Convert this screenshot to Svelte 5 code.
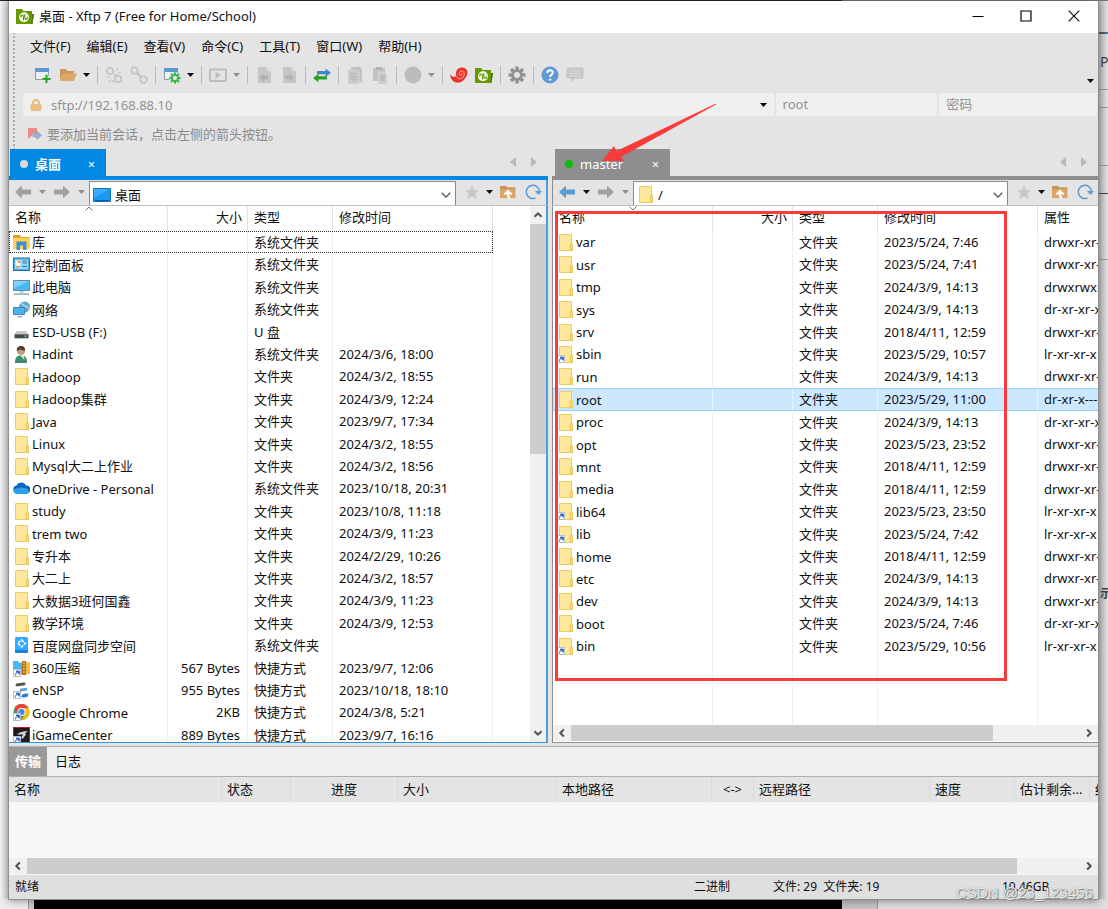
<script>
  const menus = ['文件(F)', '编辑(E)', '查看(V)', '命令(C)', '工具(T)', '窗口(W)', '帮助(H)'];

  const tools = [
    { icon: 'newSession', label: '新建会话' },
    { icon: 'open', label: '打开' },
    { icon: 'caret', label: '打开列表' },
    null,
    { icon: 'unlink', label: '断开' },
    { icon: 'link', label: '重新连接' },
    null,
    { icon: 'sessionProps', label: '会话属性' },
    { icon: 'caret', label: '属性列表' },
    null,
    { icon: 'play', label: '运行' },
    { icon: 'caret', label: '运行列表', off: true },
    null,
    { icon: 'docLeft', label: '传输到左侧' },
    { icon: 'docRight', label: '传输到右侧' },
    null,
    { icon: 'sync', label: '同步' },
    null,
    { icon: 'copy', label: '复制' },
    { icon: 'paste', label: '粘贴' },
    null,
    { icon: 'globe', label: '编码' },
    { icon: 'caret', label: '编码列表', off: true },
    null,
    { icon: 'shell', label: 'Xshell' },
    { icon: 'ftp', label: 'Xftp' },
    null,
    { icon: 'gear', label: '选项' },
    null,
    { icon: 'help', label: '帮助' },
    { icon: 'chat', label: '反馈' }
  ];

  const local = [
    ['library', '库', '', '系统文件夹', ''],
    ['control', '控制面板', '', '系统文件夹', ''],
    ['pc', '此电脑', '', '系统文件夹', ''],
    ['network', '网络', '', '系统文件夹', ''],
    ['drive', 'ESD-USB (F:)', '', 'U 盘', ''],
    ['user', 'Hadint', '', '系统文件夹', '2024/3/6, 18:00'],
    ['folder', 'Hadoop', '', '文件夹', '2024/3/2, 18:55'],
    ['folder', 'Hadoop集群', '', '文件夹', '2024/3/9, 12:24'],
    ['folder', 'Java', '', '文件夹', '2023/9/7, 17:34'],
    ['folder', 'Linux', '', '文件夹', '2024/3/2, 18:55'],
    ['folder', 'Mysql大二上作业', '', '文件夹', '2024/3/2, 18:56'],
    ['cloud', 'OneDrive - Personal', '', '系统文件夹', '2023/10/18, 20:31'],
    ['folder', 'study', '', '文件夹', '2023/10/8, 11:18'],
    ['folder', 'trem two', '', '文件夹', '2024/3/9, 11:23'],
    ['folder', '专升本', '', '文件夹', '2024/2/29, 10:26'],
    ['folder', '大二上', '', '文件夹', '2024/3/2, 18:57'],
    ['folder', '大数据3班何国鑫', '', '文件夹', '2024/3/9, 11:23'],
    ['folder', '教学环境', '', '文件夹', '2024/3/9, 12:53'],
    ['baidu', '百度网盘同步空间', '', '系统文件夹', ''],
    ['zip', '360压缩', '567 Bytes', '快捷方式', '2023/9/7, 12:06'],
    ['ensp', 'eNSP', '955 Bytes', '快捷方式', '2023/10/18, 18:10'],
    ['chrome', 'Google Chrome', '2KB', '快捷方式', '2024/3/8, 5:21'],
    ['igame', 'iGameCenter', '889 Bytes', '快捷方式', '2023/9/7, 16:16']
  ];

  const remote = [
    ['folder', 'var', '2023/5/24, 7:46', 'drwxr-xr-x'],
    ['folder', 'usr', '2023/5/24, 7:41', 'drwxr-xr-x'],
    ['folder', 'tmp', '2024/3/9, 14:13', 'drwxrwxrwt'],
    ['folder', 'sys', '2024/3/9, 14:13', 'dr-xr-xr-x'],
    ['folder', 'srv', '2018/4/11, 12:59', 'drwxr-xr-x'],
    ['folderLink', 'sbin', '2023/5/29, 10:57', 'lr-xr-xr-x'],
    ['folder', 'run', '2024/3/9, 14:13', 'drwxr-xr-x'],
    ['folder', 'root', '2023/5/29, 11:00', 'dr-xr-x---'],
    ['folder', 'proc', '2024/3/9, 14:13', 'dr-xr-xr-x'],
    ['folder', 'opt', '2023/5/23, 23:52', 'drwxr-xr-x'],
    ['folder', 'mnt', '2018/4/11, 12:59', 'drwxr-xr-x'],
    ['folder', 'media', '2018/4/11, 12:59', 'drwxr-xr-x'],
    ['folderLink', 'lib64', '2023/5/23, 23:50', 'lr-xr-xr-x'],
    ['folderLink', 'lib', '2023/5/24, 7:42', 'lr-xr-xr-x'],
    ['folder', 'home', '2018/4/11, 12:59', 'drwxr-xr-x'],
    ['folder', 'etc', '2024/3/9, 14:13', 'drwxr-xr-x'],
    ['folder', 'dev', '2024/3/9, 14:13', 'drwxr-xr-x'],
    ['folder', 'boot', '2023/5/24, 7:46', 'dr-xr-xr-x'],
    ['folderLink', 'bin', '2023/5/29, 10:56', 'lr-xr-xr-x']
  ];

  const queue = ['名称', '状态', '进度', '大小', '本地路径', '<->', '远程路径', '速度', '估计剩余...', '经过时间'];
  const gearAngles = [0, 45, 90, 135, 180, 225, 270, 315];
</script>

{#snippet gearShape(cx, cy, r, color, hole)}
  {#each gearAngles as a}
    <rect x={cx - r * 0.2} y={cy - r} width={r * 0.4} height={r * 0.5} fill={color} transform="rotate({a} {cx} {cy})" />
  {/each}
  <circle {cx} {cy} r={r * 0.52} fill="none" stroke={color} stroke-width={r * (hole ? 0.34 : 0.28)} />
{/snippet}

{#snippet shortcut()}
  <rect x="0.5" y="9.5" width="7" height="7" fill="#fff" stroke="#b8c0cc" />
  <path d="M2.200 15.500c0-2 .8-2.700 2-2.900M3 11h3.400v3.400z" fill="#2a62b8" stroke="#2a62b8" stroke-width="0.7" />
{/snippet}

{#snippet ftpMark()}
  <path d="M0 2h6l1.5 2H16v3h2l-1.6 10H0z" fill="#669900" />
  <path d="M16 7h2l-1.6 10h-1z" fill="#4c7a00" />
  <circle cx="8" cy="10.2" r="4.9" fill="#fff" />
  <path d="M7.400 13.500V9.300a1.300 1.300 0 1 0-2.100 1.200M8.800 7v4.200a1.300 1.300 0 1 0 2.100-1.200" fill="none" stroke="#669900" stroke-width="1.200" />
{/snippet}

{#snippet tool(name)}
  {#if name === 'caret'}
    <svg class="caret" viewBox="0 0 7 4" aria-hidden="true"><path d="M0 0h7L3.5 4z" fill="currentColor" /></svg>
  {:else}
    <svg class="tool-icon" viewBox="0 0 18 18" aria-hidden="true">
      {#if name === 'newSession'}
        <path d="M1.5 3.5h13v10h-13z" fill="#eef0f2" stroke="#8d9aa5" />
        <path d="M1 2h14v4H1z" fill="#5a9ad0" />
        <path d="M12.5 8.5v8.5M8.3 12.8h8.6" stroke="#e4e4e4" stroke-width="4" />
        <path d="M12.5 8.8v8.2M8.4 12.9h8.2" stroke="#22a822" stroke-width="2" />
      {:else if name === 'open'}
        <path d="M1 3h6l1.5 2H15v3H4L1 15z" fill="#c9985c" />
        <path d="M4.5 7.5H18L14.8 15H1z" fill="#dba868" />
      {:else if name === 'unlink'}
        <g fill="none" stroke="#c6c6c6" stroke-width="2"><circle cx="5" cy="5" r="3.2" /><circle cx="13.2" cy="13" r="3.2" /></g>
        <path d="M11 4.5 13 2M13.5 6.5H16M12 9l-1-1M2 11.500l2.500-.5M4 16l2-2.500M8 17v-3" stroke="#c6c6c6" stroke-width="1.500" />
        <path d="m9 9 2 2" stroke="#c6c6c6" stroke-width="2" />
      {:else if name === 'link'}
        <g fill="none" stroke="#c6c6c6" stroke-width="2"><circle cx="4.500" cy="4.500" r="3.200" /><circle cx="13.500" cy="13.500" r="3.200" /><path d="m6.500 6.500 5 5" stroke-width="2.600" /></g>
      {:else if name === 'sessionProps'}
        <path d="M1.500 3.500h13v10h-13z" fill="#eef0f2" stroke="#8d9aa5" />
        <path d="M1 2h14v4H1z" fill="#5a9ad0" />
        <circle cx="12" cy="12" r="5.800" fill="#e8ebe8" />
        {@render gearShape(12, 12, 5.6, '#3bb54a', false)}
      {:else if name === 'play'}
        <rect x="1" y="3.500" width="16" height="11.500" rx="1" fill="none" stroke="#bdbdbd" stroke-width="2" />
        <path d="M6.500 6v6.500l5.500-3.200z" fill="#bdbdbd" />
      {:else if name === 'docLeft' || name === 'docRight'}
        <path d="M3 1h8.500L16 5.500V17H3z" fill="#c6c6c6" />
        <path d="M11.500 1v4.500H16z" fill="#dadada" />
        <path d={name === 'docLeft' ? 'M4.5 11.500 9 7.500v2.300h4v3.400H9v2.300z' : 'M14 11.500 9.500 7.500v2.300h-4v3.400h4v2.300z'} fill="#b2b2b2" />
      {:else if name === 'sync'}
        <path d="M4 5h8.500V2.500L18 6.700l-5.500 4.200V8.300H4z" fill="#3f86cf" />
        <path d="M14 10.200H5.500V7.800L0 12l5.500 4.200v-2.600H14z" fill="#26a326" />
      {:else if name === 'copy'}
        <path d="M5 1h9l2 2v13H5z" fill="#c2c2c2" /><path d="M2 4h9l2 2v12H2z" fill="#c9c9c9" stroke="#dedede" stroke-width=".6" />
        <path d="M4 8h6M4 10.500h7M4 13h7" stroke="#b0b0b0" />
      {:else if name === 'paste'}
        <path d="M2 2h12v13H2z" fill="#c2c2c2" /><path d="M5 1h6v3H5z" fill="#b2b2b2" /><path d="M7 6h7l2 2v10H7z" fill="#cdcdcd" stroke="#dedede" stroke-width=".6" />
        <path d="M9 10h5M9 12h5M9 14h5" stroke="#b0b0b0" />
      {:else if name === 'globe'}
        <circle cx="9" cy="9" r="8.500" fill="#bcbcbc" />
      {:else if name === 'shell'}
        <path d="M0 8.500c2 2.500 4.800 3 6.400 1.500C4.500 5.500 8 1 12.500 1.500 17 2 18.500 6 16.800 9.500 15 14 11 17.200 6.800 16.600 2.500 16 .5 12.500 0 8.500z" fill="#e8342a" />
        <path d="M7 10.500c1 3.400 5.500 2.800 7-.8 1.200-3-1-5.300-3.200-4.400-2 .9-2 3.700 0 3.900 1.500.1 2-1.700.9-2" fill="none" stroke="#f4b6b0" stroke-width="1" />
      {:else if name === 'ftp'}
        {@render ftpMark()}
      {:else if name === 'gear'}
        {@render gearShape(9, 9, 8.5, '#8f9294', true)}
      {:else if name === 'help'}
        <circle cx="9" cy="9" r="8.500" fill="#5f9ad3" />
        <path d="M6.200 7c0-3.800 5.800-3.600 5.600-.3-.1 2-2.700 1.900-2.700 4.300" fill="none" stroke="#fff" stroke-width="2" />
        <circle cx="9.100" cy="13.600" r="1.200" fill="#fff" />
      {:else if name === 'chat'}
        <path d="M1.500 1.500h15l1 1v9l-1 1H9l-4 4v-4H1.500l-1-1v-9z" fill="#c6c6c6" />
        <path d="M3.500 5h11M3.500 7.500h11M3.500 10h11" stroke="#dcdcdc" />
      {/if}
    </svg>
  {/if}
{/snippet}

{#snippet fileIcon(name)}
  <svg class="file-icon" viewBox="0 0 17 17" aria-hidden="true">
    {#if name === 'folder' || name === 'folderLink'}
      <path d="M2.500.5h12v11l1 .8v4.200h-13z" fill="#ffe79b" stroke="#eccb62" />
      <path d="M13.200 16.500V10l2.300-.5v7z" fill="#f8d978" stroke="#e9c455" stroke-width=".8" />
      {#if name === 'folderLink'}{@render shortcut()}{/if}
    {:else if name === 'library'}
      <path d="M0 1h7l1 2h8.500v3H0z" fill="#e0a21b" /><path d="M0 4h17v11H0z" fill="#ffd15c" /><path d="M3.500 16V7.500h10V16H10v-4.500H7V16z" fill="#3d8fd0" />
    {:else if name === 'control'}
      <rect x=".5" y="2" width="16" height="12.500" fill="#49b4ec" stroke="#2c6f9f" />
      <rect x="2" y="3.500" width="13" height="9.500" fill="#9bd8f8" /><circle cx="5" cy="7" r="2.600" fill="#fff" /><path d="M5 7V4.400A2.600 2.600 0 0 1 7.600 7z" fill="#f29a1f" />
      <path d="M9.500 5h4.500M9.500 7h4.500M9 10.500h5" stroke="#2778b8" stroke-width="1.200" /><path d="M3 11h3" stroke="#e99a2e" stroke-width="1.400" />
    {:else if name === 'pc'}
      <path d="M.5 1.500h16v10H.5z" fill="#4bb8f5" stroke="#5b8fb4" /><path d="M1 2h15L1 9z" fill="#83d1fa" /><path d="M6.500 12h4v1.500h-4z" fill="#b8c6d0" /><path d="M1 15h15" stroke="#7b98ad" stroke-width="1.300" />
    {:else if name === 'network'}
      <circle cx="11.500" cy="6" r="5.500" fill="#5aa8cb" /><path d="M8 2c3 1 1 3 4 3s2 3 4.600 2" stroke="#b8dbe8" stroke-width="1.500" fill="none" />
      <path d="M.5 6.500h11v7H.5z" fill="#42b3f4" stroke="#4a86ae" /><path d="M4 15h5v1.300H4z" fill="#8fa8b8" />
    {:else if name === 'drive'}
      <path d="M3.500 7h10l2 3.500h-14z" fill="#c9c9c9" /><path d="M1.500 10.300h14v4h-14z" fill="#45494c" /><circle cx="12.500" cy="12.300" r="1" fill="#49e25c" />
    {:else if name === 'user'}
      <path d="M2 17c-.3-5 2-7.500 6-7.700 4 .2 6.500 2.700 6 7.700z" fill="#3f8f6c" /><path d="M7 9h3.500l1 5z" fill="#dff0e8" /><circle cx="8" cy="5" r="3.900" fill="#c79a77" /><path d="M3.800 5C3.300 0 7 0 8.500 0s4.200 1 3.400 5C9.500 4 7 3.500 6 4z" fill="#4d4038" />
    {:else if name === 'cloud'}
      <path d="M4 13.500a4 4 0 0 1-.5-7.900A5.300 5.300 0 0 1 13 5.500a4 4 0 0 1 .5 8z" fill="#0a66c2" /><path d="M4 14a3 3 0 0 1-2.500-5L8 7.500l5.500 1a2.900 2.900 0 0 1 .2 5.500z" fill="#28a0ea" />
    {:else if name === 'baidu'}
      <rect x="2" y="0" width="13" height="16" rx="1.500" fill="#35a8ff" /><path d="M8.500 2.800 12.200 6.300 8.500 9.800 4.800 6.300z" fill="none" stroke="#fff" stroke-width="1.600" stroke-dasharray="3 1" /><path d="M2 13h13v1.500A1.500 1.500 0 0 1 13.500 16h-10A1.500 1.500 0 0 1 2 14.500z" fill="#1c80da" />
    {:else if name === 'zip'}
      <path d="M0 1h5l1 1.500h5V14H0z" fill="#49b6ee" /><path d="M9 1h4v14H9z" fill="#b86f1e" /><path d="M13 2h4v12h-4z" fill="#f5c23c" /><path d="M10 3h2M10 6h2M10 9h2M10 12h2" stroke="#f6dc9c" />{@render shortcut()}
    {:else if name === 'ensp'}
      <path d="M3 2.500c3 1.600 6-2 9 0" stroke="#4c5358" stroke-width="3" fill="none" /><path d="M7 7.500c3 1.500 4-1 7 0" stroke="#5aa4e0" stroke-width="3" fill="none" /><path d="M9 13.500c2 1 4-1 6 0" stroke="#2b7fd1" stroke-width="3.500" fill="none" />{@render shortcut()}
    {:else if name === 'chrome'}
      <circle cx="8.500" cy="8" r="8" fill="#34a853" /><path d="M1.600 4A8 8 0 0 1 15.400 4L8.500 4.200 5 10z" fill="#ea4335" /><path d="M15.400 4A8 8 0 0 1 8.500 16L12 10 8.500 4z" fill="#fbbc05" /><circle cx="8.500" cy="8" r="4" fill="#fff" /><circle cx="8.500" cy="8" r="3.100" fill="#4285f4" />{@render shortcut()}
    {:else if name === 'igame'}
      <rect x=".5" y=".5" width="16" height="16" fill="#1f1a1c" stroke="#c01622" /><path d="M4 7.500C7 4.500 11 4.500 15 4l-3 2.500 1 1-3 4H8l2-4z" fill="#d5d5d8" />{@render shortcut()}
    {/if}
  </svg>
{/snippet}

{#snippet navIcon(name, color)}
  <svg class="tool-icon" viewBox="0 0 18 18" aria-hidden="true">
    {#if name === 'back'}
      <path d="M1 9 8 2.500v4h9v5H8v4z" fill={color} />
    {:else if name === 'forward'}
      <path d="M17 9 10 2.500v4H1v5h9v4z" fill={color} />
    {:else if name === 'star'}
      <path d="m9 2 2.100 4.700 5.100.5-3.900 3.400 1.200 5L9 13l-4.500 2.600 1.200-5L1.800 7.200l5.100-.5z" fill="#c8c8c8" />
    {:else if name === 'up'}
      <path d="M1 3h6l1 1.500h8.500V15H1z" fill="#d9a566" /><path d="M1 3h6l1 1.500h8.500V6H1z" fill="#c9955a" /><path d="M9 6.500 13.500 11l-1.200 1.200-2-1.800c.2 2 .4 3.400 1.200 4.600h-2.500C8 13.500 7.800 12 7.800 10.400l-2.100 1.800L4.500 11z" fill="#fff" />
    {:else}
      <path d="M15.400 8A6.600 6.600 0 1 0 11.500 15" fill="none" stroke="#5b9ad2" stroke-width="1.500" /><path d="M11 8h7l-3.500 4z" fill="#5b9ad2" />
    {/if}
  </svg>
{/snippet}

{#snippet chevron(dir)}
  <svg class="chevron {dir}" viewBox="0 0 10 10" aria-hidden="true"><path d="m1.500 6.800 3.500-3.500 3.500 3.500" fill="none" stroke="#505050" stroke-width="2" /></svg>
{/snippet}

{#snippet tabArrows()}
  <span class="tab-arrows">
    <button aria-label="上一个标签"><svg viewBox="0 0 6 10"><path d="M6 0v10L0 5z" fill="#b9b9b9" /></svg></button>
    <button aria-label="下一个标签"><svg viewBox="0 0 6 10"><path d="M0 0v10l6-5z" fill="#b9b9b9" /></svg></button>
  </span>
{/snippet}

{#snippet navBar(path, icon, active)}
  <div class="nav">
    <button class="arrow" aria-label="后退">{@render navIcon('back', active ? '#5b9dd5' : '#a0a0a0')}</button>
    <button class="drop" class:off={!active} aria-label="后退列表">{@render tool('caret')}</button>
    <button class="arrow" aria-label="前进">{@render navIcon('forward', '#a0a0a0')}</button>
    <button class="drop off" aria-label="前进列表">{@render tool('caret')}</button>
    <div class="path">
      {#if icon === 'desktop'}
        <svg class="desk-icon" viewBox="0 0 18 14" aria-hidden="true"><path d="M.5.500h17v13H.5z" fill="#159af0" stroke="#1871b0" /><path d="M1 1h16L1 10z" fill="#39adf8" /><path d="M2 12.500h14" stroke="#0b5f9f" /></svg>
      {:else}
        {@render fileIcon('folder')}
      {/if}
      <input aria-label="路径" value={path} />
      <button class="open-path" aria-label="路径列表"><svg viewBox="0 0 10 6"><path d="m.7.7 4.300 4.300L9.300.7" fill="none" stroke="#555" stroke-width="1.300" /></svg></button>
    </div>
    <button class="act" aria-label="收藏">{@render navIcon('star')}</button>
    <button class="drop" aria-label="收藏列表">{@render tool('caret')}</button>
    <button class="act" aria-label="上级目录">{@render navIcon('up')}</button>
    <button class="act" aria-label="刷新">{@render navIcon('refresh')}</button>
  </div>
{/snippet}

<div class="desktop">
  <div class="behind-right" aria-hidden="true"><i class="blue-line"></i><span>P</span><i class="r1"></i><i class="r2"></i><i class="r3"></i><i class="r4"></i><i class="r5"></i><b>示</b></div>
  <div class="behind-bottom" aria-hidden="true"></div>

  <div class="window">
    <header class="title">
      <svg class="tool-icon" viewBox="0 0 18 18" aria-hidden="true">{@render ftpMark()}</svg>
      <h1>桌面 - Xftp 7 (Free for Home/School)</h1>
      <button aria-label="最小化"><svg viewBox="0 0 12 12"><path d="M.5 6.500h11" stroke="#000" /></svg></button>
      <button aria-label="最大化"><svg viewBox="0 0 12 12"><path d="M1 1h10v10H1z" fill="none" stroke="#000" stroke-width="1.200" /></svg></button>
      <button aria-label="关闭"><svg viewBox="0 0 12 12"><path d="m.7.7 10.600 10.600M11.300.7.7 11.300" stroke="#000" stroke-width="1.100" /></svg></button>
    </header>

    <div class="bars">
      <nav class="menu">
        {#each menus as m}<button>{m}</button>{/each}
      </nav>
      <div class="toolbar">
        {#each tools as t}
          {#if t}
            <button class:drop={t.icon === 'caret'} class:off={t.off} aria-label={t.label}>{@render tool(t.icon)}</button>
          {:else}
            <span class="sep"></span>
          {/if}
        {/each}
        <button class="more" aria-label="更多按钮">{@render tool('caret')}</button>
      </div>
      <div class="address">
        <div class="host">
          <svg viewBox="0 0 12 12" aria-hidden="true"><path d="M3 6V4a3 3 0 0 1 6 0v2" fill="none" stroke="#e5b776" stroke-width="1.800" /><rect x=".5" y="5" width="11" height="7" rx="1" fill="#eabf83" /></svg>
          <input aria-label="主机" value="sftp://192.168.88.10" />
          <button aria-label="主机列表">{@render tool('caret')}</button>
        </div>
        <input class="login" aria-label="用户名" value="root" />
        <input class="login pass" aria-label="密码" placeholder="密码" />
      </div>
      <div class="hint">
        <svg viewBox="0 0 14 14" aria-hidden="true"><path d="M0 1h9v11L4.500 8 0 12z" fill="#e58a88" /><path d="M4.500 6.500H9V3.500l5 4.800-5 4.700v-3H4.500z" fill="#8fb2da" /></svg>
        <span>要添加当前会话，点击左侧的箭头按钮。</span>
      </div>
    </div>

    <main class="panes">
      <section class="pane local">
        <div class="tabs">
          <div class="tab"><i></i><strong>桌面</strong><button aria-label="关闭标签">×</button></div>
          {@render tabArrows()}
        </div>
        {@render navBar('桌面', 'desktop', false)}
        <div class="list">
          <svg class="sort" viewBox="0 0 8 5" aria-hidden="true"><path d="M.5 4.500 4 1l3.500 3.500" fill="none" stroke="#777" /></svg>
          <div class="scroll-area">
            <table>
              <colgroup><col class="name" /><col class="size" /><col class="type" /><col class="time" /></colgroup>
              <thead><tr><th>名称</th><th class="num">大小</th><th>类型</th><th>修改时间</th></tr></thead>
              <tbody>
                {#each local as [icon, name, size, type, time], i}
                  <tr class:focus={i === 0}>
                    <td class="file">{@render fileIcon(icon)}<span>{name}</span></td>
                    <td class="num">{size}</td><td>{type}</td><td>{time}</td>
                  </tr>
                {/each}
              </tbody>
            </table>
          </div>
          <div class="vbar"><span class="end">{@render chevron('up')}</span><span class="track"><i></i></span><span class="end">{@render chevron('down')}</span></div>
        </div>
      </section>

      <section class="pane remote">
        <div class="tabs">
          <div class="tab"><i></i><span>master</span><button aria-label="关闭标签">×</button></div>
          {@render tabArrows()}
        </div>
        {@render navBar('/', 'folder', true)}
        <div class="list">
          <svg class="sort" viewBox="0 0 8 5" aria-hidden="true"><path d="M.5.500 4 4 7.500.5" fill="none" stroke="#777" /></svg>
          <div class="scroll-area">
            <table>
              <colgroup><col class="name" /><col class="size" /><col class="type" /><col class="time" /><col /></colgroup>
              <thead><tr><th>名称</th><th class="num">大小</th><th>类型</th><th>修改时间</th><th>属性</th></tr></thead>
              <tbody>
                {#each remote as [icon, name, time, attr]}
                  <tr class:selected={name === 'root'}>
                    <td class="file">{@render fileIcon(icon)}<span>{name}</span></td>
                    <td></td><td>文件夹</td><td>{time}</td><td>{attr}</td>
                  </tr>
                {/each}
                <tr class="filler"><td></td><td></td><td></td><td></td><td></td></tr>
              </tbody>
            </table>
          </div>
          <div class="hbar"><span class="end">{@render chevron('left')}</span><span class="track"><i></i></span><span class="end">{@render chevron('right')}</span></div>
        </div>
      </section>
    </main>

    <section class="queue">
      <div class="queue-tabs"><button class="on">传输</button><button>日志</button></div>
      <table>
        <colgroup>{#each queue as _, i}<col class="q{i}" />{/each}</colgroup>
        <thead><tr>{#each queue as q, i}<th class:mid={i === 2 || i === 5}>{q}</th>{/each}</tr></thead>
      </table>
      <div class="queue-body"></div>
      <div class="hbar"><span class="end">{@render chevron('left')}</span><span class="track"><i></i></span><span class="end">{@render chevron('right')}</span></div>
    </section>

    <footer class="status">
      <span>就绪</span><span>二进制</span><span class="counts">文件: 29  文件夹: 19</span><span>10.46GB</span>
    </footer>
  </div>

  <svg class="marks" aria-hidden="true">
    <rect x="556.500" y="212.500" width="449" height="467" fill="none" stroke="#fb3a3a" stroke-width="3" />
    <path d="M602 161 614 146l2.500 5L716 103.500v1L621 157l3 4z" fill="#fb3a3a" />
  </svg>
  <div class="watermark">CSDN @23_123456</div>
</div>

<style>
  :global(body) {
    background: #e9e9e9;
  }
  .desktop,
  .desktop :global(*) {
    box-sizing: border-box;
  }
  .desktop {
    position: relative;
    display: flex;
    height: 100vh;
    padding: 1px 9px 9px 8px;
    overflow: hidden;
    background: linear-gradient(90deg, #222 0 842px, #777 842px) top / 100% 1px no-repeat, linear-gradient(90deg, #f4f4f4, #d8d8d8 8px);
    color: #101010;
    font: 13px/18px "Noto Sans", "Noto Sans CJK SC", sans-serif;
  }
  button {
    display: flex;
    align-items: center;
    justify-content: center;
    flex: none;
    margin: 0;
    padding: 0;
    border: 0;
    background: none;
    color: inherit;
    font: inherit;
  }
  input {
    min-width: 0;
    padding: 0;
    border: 0;
    outline: 0;
    background: none;
    color: inherit;
    font: inherit;
  }
  svg {
    display: block;
    flex: none;
  }

  .behind-right {
    position: absolute;
    inset: 1px 0 0 auto;
    width: 9px;
    overflow: hidden;
    background: linear-gradient(90deg, #bdbdbd, #e2e2e2);
  }
  .behind-right i {
    position: absolute;
    left: 0;
    width: 100%;
    height: 1px;
    background: #999;
  }
  .behind-right span,
  .behind-right b {
    position: absolute;
    left: 1px;
    top: 52px;
    color: #444;
    font-size: 14px;
  }
  .behind-right b {
    top: 584px;
    font-size: 12px;
  }
  .behind-right .blue-line { top: 31px; height: 2px; background: linear-gradient(90deg, #555 6px, #2684d0 6px); }
  .behind-right .r1 { top: 88px; }
  .behind-right .r2 { top: 106px; }
  .behind-right .r3 { top: 164px; }
  .behind-right .r4 { top: 192px; background: #444; }
  .behind-right .r5 { top: 258px; }
  .behind-bottom {
    position: absolute;
    inset: auto 0 0 0;
    height: 10px;
    background: linear-gradient(90deg, #eee 28px, #999 28px 29px, #ccc 29px 34px, #000 34px 842px, #c4c4c4 842px 877px, #999 877px 878px, #dedede 878px);
  }

  .window {
    position: relative;
    display: flex;
    flex: 1;
    flex-direction: column;
    min-width: 0;
    border: 1px solid #8f8f8f;
    border-top: 0;
    background: #e4e4e4;
    box-shadow: 0 1px 8px #0006;
  }
  .tool-icon {
    width: 18px;
    height: 18px;
  }
  .caret {
    width: 7px;
    height: 4px;
  }
  .off {
    color: #909090;
  }

  .title {
    display: flex;
    align-items: center;
    height: 32px;
    padding: 0 0 2px 7px;
    background: #fff;
  }
  .title h1 {
    flex: 1;
    margin: 0 0 0 5px;
    font-size: 13px;
    font-weight: 400;
  }
  .title button {
    width: 48px;
    height: 30px;
  }
  .title button svg {
    width: 12px;
    height: 12px;
  }

  .bars {
    height: 116px;
    padding-left: 14px;
    background: radial-gradient(circle, #a8a8a8 1px, transparent 1px) 3px 2px / 4px 4px repeat-y;
  }
  .menu {
    display: flex;
    gap: 16px;
    height: 26px;
    padding-left: 7px;
  }
  .toolbar {
    display: flex;
    align-items: center;
    height: 34px;
    padding: 0 3px 2px 7px;
  }
  .toolbar button {
    width: 25px;
    height: 24px;
  }
  .toolbar .drop {
    width: 13px;
  }
  .toolbar .more {
    width: 9px;
    margin-left: auto;
    padding-top: 11px;
  }
  .sep {
    width: 1px;
    height: 18px;
    margin: 0 3px 0 4px;
    background: #bababa;
  }
  .address {
    display: grid;
    grid-template-columns: 752fr 162fr 158fr;
    gap: 2px;
    height: 23px;
    padding-right: 1px;
    color: #929292;
  }
  .host,
  .login {
    background: #efefef;
  }
  .host {
    display: flex;
    align-items: center;
    padding-left: 7px;
  }
  .host svg:first-child {
    width: 12px;
    height: 12px;
  }
  .host input {
    flex: 1;
    margin-left: 9px;
  }
  .host button {
    width: 20px;
    height: 23px;
    color: #000;
  }
  .host .caret,
  .host button svg:first-child {
    width: 7px;
    height: 4px;
  }
  .login {
    padding: 0 7px 2px;
  }
  .pass::placeholder {
    color: #929292;
    opacity: 1;
  }
  .hint {
    display: flex;
    align-items: center;
    gap: 5px;
    height: 33px;
    padding: 2px 0 0 5px;
    color: #8a8a8a;
  }
  .hint svg {
    width: 14px;
    height: 14px;
  }

  .panes {
    display: grid;
    grid-template-columns: 539fr 546fr;
    flex: 1;
    gap: 4px;
    min-height: 0;
    padding-bottom: 3px;
  }
  .pane {
    display: flex;
    flex-direction: column;
    min-width: 0;
    min-height: 0;
  }
  .tabs {
    display: flex;
    align-items: flex-end;
    justify-content: space-between;
    height: 31px;
    border-bottom: 4px solid #0088e2;
  }
  .remote .tabs {
    border-color: #8e8e8e;
  }
  .tab {
    display: flex;
    align-items: center;
    width: 96px;
    height: 27px;
    margin-left: 1px;
    padding: 3px 9px 0 10px;
    background: #0088e2;
    color: #fff;
  }
  .tab i {
    width: 8px;
    height: 8px;
    margin-right: 7px;
    border-radius: 50%;
    background: #d9d9d9;
  }
  .tab button {
    width: 11px;
    height: 18px;
    margin-left: auto;
  }
  .remote .tab {
    width: 115px;
    margin-left: 3px;
    background: #8e8e8e;
  }
  .remote .tab i {
    background: #0abb0a;
  }
  .tab-arrows {
    display: flex;
    gap: 15px;
    padding: 0 11px 9px 0;
  }
  .tab-arrows svg {
    width: 6px;
    height: 10px;
  }
  .nav {
    display: flex;
    align-items: center;
    height: 26px;
    padding: 0 1px 2px 0;
    border-bottom: 1px solid #c0c0c0;
  }
  .local .nav,
  .local .list {
    border-right: 2px solid #4b9fdc;
  }
  .remote .nav,
  .remote .list {
    border-left: 1px solid #8e8e8e;
  }
  .arrow {
    width: 28px;
  }
  .nav .drop {
    width: 11px;
    height: 20px;
  }
  .act {
    width: 25px;
  }
  .path {
    display: flex;
    align-items: center;
    flex: 1;
    align-self: flex-start;
    min-width: 0;
    height: 24px;
    margin: 1px 3px 0 2px;
    padding: 2px 3px 0 3px;
    border: 1px solid #8a8a8a;
    border-bottom: 0;
    background: #fff;
  }
  .path input {
    flex: 1;
    margin-left: 4px;
  }
  .desk-icon {
    width: 18px;
    height: 14px;
  }
  .open-path {
    width: 12px;
    height: 18px;
  }
  .open-path svg {
    width: 10px;
    height: 6px;
  }
  .list {
    position: relative;
    display: flex;
    flex: 1;
    min-height: 0;
    border-bottom: 1px solid #2c97df;
    background: #fff;
  }
  .remote .list {
    flex-direction: column;
    border-bottom-color: #8e8e8e;
  }
  .sort {
    position: absolute;
    top: 0;
    left: 76px;
    width: 8px;
    height: 5px;
  }
  .scroll-area {
    flex: 1;
    min-width: 0;
    min-height: 0;
    overflow: hidden;
  }
  table {
    border-collapse: separate;
    border-spacing: 0;
    table-layout: fixed;
  }
  .local table {
    width: 484px;
  }
  .remote table {
    width: 100%;
    height: 100%;
  }
  col.name { width: 159px; }
  col.size { width: 80px; }
  col.type { width: 85px; }
  col.time { width: 160px; }
  .remote col.name { width: 160px; }
  th,
  td {
    height: 22px;
    padding: 0 0 1px 6px;
    border-right: 1px solid #e8f2fa;
    line-height: 18px;
    font-weight: 400;
    text-align: left;
    vertical-align: middle;
    white-space: nowrap;
    overflow: hidden;
  }
  th {
    height: 25px;
    padding-bottom: 3px;
    border-right-color: #e2e2e2;
  }
  .remote th:last-child,
  .remote td:last-child {
    border-right: 0;
  }
  tbody tr:nth-child(5n + 2) td,
  tbody tr:nth-child(5n + 4) td {
    height: 23px;
  }
  tbody tr.filler td {
    height: auto;
  }
  .num {
    padding: 0 7px 1px 0;
    text-align: right;
  }
  th.num {
    padding: 0 5px 3px 0;
  }
  .file {
    padding-left: 4px;
  }
  .file span,
  .file svg {
    display: inline-block;
    vertical-align: middle;
  }
  .file span {
    margin-left: 2px;
  }
  .file-icon {
    width: 17px;
    height: 17px;
  }
  .focus {
    outline: 1px dotted #333;
    outline-offset: -1px;
  }
  .selected td {
    border-top: 1px solid #99d1ff;
    border-bottom: 1px solid #99d1ff;
    background: #cce8ff;
  }

  .vbar,
  .hbar {
    display: flex;
    flex: none;
    background: #f0f0f0;
  }
  .vbar {
    flex-direction: column;
    width: 16px;
  }
  .hbar {
    height: 16px;
    margin-bottom: 1px;
  }
  .end {
    display: flex;
    align-items: center;
    justify-content: center;
    flex: none;
    width: 18px;
    height: 16px;
  }
  .vbar .end {
    width: 16px;
    height: 18px;
  }
  .track {
    flex: 1;
  }
  .track i {
    display: block;
    background: #cdcdcd;
  }
  .vbar .track i {
    height: 46%;
  }
  .remote .track i {
    width: 83%;
    height: 16px;
  }
  .queue .track i {
    width: 94%;
    height: 16px;
  }
  .chevron {
    width: 10px;
    height: 10px;
  }
  .chevron.down { transform: rotate(180deg); }
  .chevron.left { transform: rotate(-90deg); }
  .chevron.right { transform: rotate(90deg); }

  .queue {
    border-top: 1px solid #b0b0b0;
    background: #f7f7f7;
  }
  .queue-tabs {
    display: flex;
    height: 30px;
    border-bottom: 1px solid #b0b0b0;
    background: #efefef;
  }
  .queue-tabs button {
    padding: 0 8px 1px;
  }
  .queue-tabs .on {
    padding: 0 6px 1px;
    background: #999;
    color: #fff;
    font-weight: 700;
  }
  .queue table {
    width: 100%;
  }
  .queue th {
    padding: 0 0 1px 5px;
    border-right: 1px solid #d2dce6;
    border-bottom: 1px solid #dbe4ec;
    background: #e4e4e4;
  }
  .queue th:last-child {
    border-right: 0;
  }
  .queue th.mid {
    padding: 0 0 1px;
    text-align: center;
  }
  .q0 { width: 213px; }
  .q1 { width: 69px; }
  .q2 { width: 107px; }
  .q3 { width: 159px; }
  .q4 { width: 155px; }
  .q5 { width: 42px; }
  .q6 { width: 176px; }
  .q7 { width: 85px; }
  .q8 { width: 75px; }
  .queue-body {
    height: 56px;
  }
  .status {
    display: grid;
    grid-template-columns: 1fr 79px 229px 96px;
    align-items: center;
    height: 24px;
    padding-left: 6px;
    background: #dfdfdf;
    font-size: 12px;
  }
  .counts {
    white-space: pre;
  }

  .marks {
    position: absolute;
    inset: 0;
    width: 100%;
    height: 100%;
    pointer-events: none;
  }
  .watermark {
    position: absolute;
    right: 15px;
    bottom: 7px;
    color: #e8e8e8;
    font: 15px/18px "Liberation Sans", sans-serif;
    text-shadow: 1px 1px 0 #8a8a8a, 0 0 1px #777;
  }
</style>
